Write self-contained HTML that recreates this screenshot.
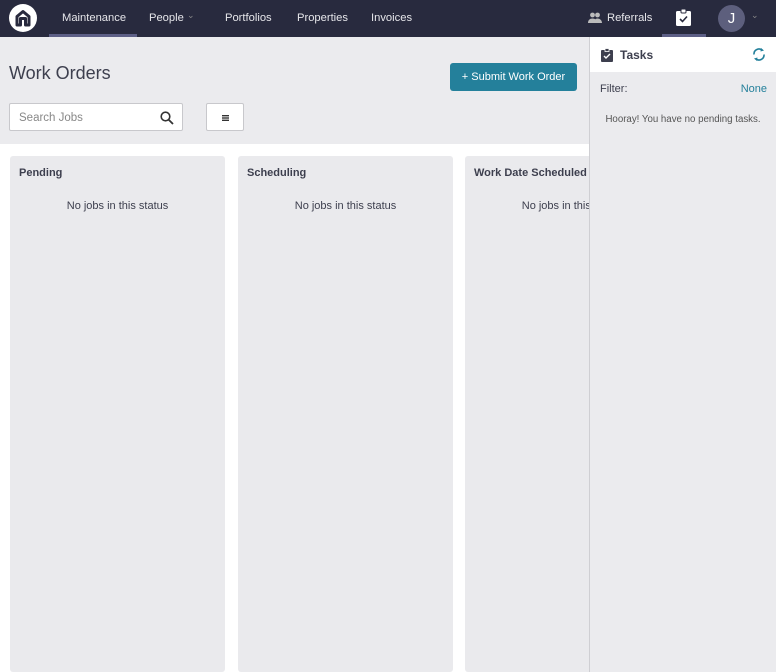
<!DOCTYPE html>
<html><head><meta charset="utf-8"><style>
*{box-sizing:border-box;margin:0;padding:0}
body{width:776px;height:672px;overflow:hidden;font-family:"Liberation Sans",Arial,sans-serif;background:#fff;position:relative;color:#3d3f4e}
.nav{position:absolute;left:0;top:0;width:776px;height:37px;background:#282a3e;color:#e6e6ea;font-size:11.2px;z-index:3}
.nav span{position:absolute;top:12px}
.logo{position:absolute;left:9px;top:4px;width:28px;height:28px;border-radius:50%;background:#fff}
.ul{position:absolute;top:34px;height:3px;background:#5d5f86}
.top{position:absolute;left:0;top:37px;width:590px;height:107px;background:#ebebee}
h1{position:absolute;left:9px;top:63px;font-size:18px;font-weight:normal;color:#3d3f4e}
.btn{position:absolute;left:450px;top:63px;width:127px;height:28px;background:#24809b;color:#fff;border-radius:3px;font-size:11px;text-align:center;line-height:28px}
.search{position:absolute;left:9px;top:103px;width:174px;height:28px;background:#fff;border:1px solid #c8c8cc;border-radius:2px;font-size:11.5px;color:#888;padding:8px 9px}
.lb{position:absolute;left:206px;top:103px;width:38px;height:28px;background:#fff;border:1px solid #c8c8cc;border-radius:2px}
.col{position:absolute;top:156px;width:215px;height:516px;background:#eaeaed;border-radius:3px}
.col b{position:absolute;left:9px;top:11px;font-size:11px;color:#3d3f4e;white-space:nowrap}
.col p{position:absolute;left:0;width:215px;top:44px;text-align:center;font-size:11px;color:#3d3f4e;white-space:nowrap}
.panel{position:absolute;left:589px;top:37px;width:187px;height:635px;background:#ebebee;border-left:1px solid #cfcfd3;z-index:2}
.ph{height:35px;background:#fff;position:relative}
</style></head><body>
<div class="nav">
<div class="logo"><svg width="28" height="28" viewBox="0 0 28 28"><path d="M8 21V12.5L14 7.5L20 12.5V21H16.5V14.5H11.5V21Z" fill="none" stroke="#282a3e" stroke-width="3" stroke-linejoin="round"/></svg></div>
<span style="left:62px">Maintenance</span>
<div class="ul" style="left:49px;width:88px"></div>
<span style="left:149px">People</span>
<span style="left:187px;color:#888;font-size:9px;top:10px">&#8964;</span>
<span style="left:225px">Portfolios</span>
<span style="left:297px">Properties</span>
<span style="left:371px">Invoices</span>
<svg style="position:absolute;left:588px;top:12px" width="14" height="12" viewBox="0 0 14 12"><circle cx="4.5" cy="3" r="2.4" fill="#bbb"/><circle cx="9.5" cy="3" r="2.4" fill="#bbb"/><path d="M0 11c0-3 2-4.5 4.5-4.5S9 8 9 11z M6 11c0-3 1.5-4.5 3.5-4.5S14 8 14 11z" fill="#bbb"/></svg>
<span style="left:607px">Referrals</span>
<svg style="position:absolute;left:676px;top:9px" width="15" height="17" viewBox="0 0 15 17"><rect x="0" y="2" width="15" height="15" rx="1.5" fill="#fff"/><rect x="5" y="0" width="5" height="4" rx="1" fill="#fff" stroke="#282a3e"/><path d="M4 10l2.5 2.5L11 7.5" fill="none" stroke="#282a3e" stroke-width="1.6"/></svg>
<div class="ul" style="left:662px;width:44px"></div>
<div style="position:absolute;left:718px;top:5px;width:27px;height:27px;border-radius:50%;background:#5d5f7d;color:#fff;font-size:15px;text-align:center;line-height:27px">J</div>
<span style="left:751px;color:#888;font-size:9px;top:10px">&#8964;</span>
</div>
<div class="top"></div>
<h1>Work Orders</h1>
<div class="btn">+ Submit Work Order</div>
<div class="search">Search Jobs
<svg style="position:absolute;left:150px;top:7px" width="14" height="14" viewBox="0 0 14 14"><circle cx="5.5" cy="5.5" r="4.3" fill="none" stroke="#333" stroke-width="1.6"/><path d="M8.7 8.7L13 13" stroke="#333" stroke-width="1.8"/></svg></div>
<div class="lb"><svg style="position:absolute;left:15px;top:11px" width="7" height="6" viewBox="0 0 7 6"><rect width="7" height="1.4" fill="#333"/><rect y="2.3" width="7" height="1.4" fill="#333"/><rect y="4.6" width="7" height="1.4" fill="#333"/></svg></div>
<div class="col" style="left:10px"><b>Pending</b><p>No jobs in this status</p></div>
<div class="col" style="left:238px"><b>Scheduling</b><p>No jobs in this status</p></div>
<div class="col" style="left:465px"><b>Work Date Scheduled</b><p>No jobs in this status</p></div>
<div class="panel">
<div class="ph">
<svg style="position:absolute;left:11px;top:11px" width="12" height="14" viewBox="0 0 12 14"><rect y="2" width="12" height="12" rx="1" fill="#3d3f4e"/><rect x="4" y="0.5" width="4" height="3" fill="#3d3f4e" stroke="#fff" stroke-width="0.8"/><path d="M3 8l2 2 4-4" fill="none" stroke="#fff" stroke-width="1.4"/></svg>
<span style="position:absolute;left:30px;top:11px;font-size:12px;font-weight:bold">Tasks</span>
<svg style="position:absolute;left:162px;top:10px" width="14" height="15" viewBox="0 0 14 15"><path d="M2 7.5A5 5 0 0 1 10.5 3.5M12 7.5A5 5 0 0 1 3.5 11.5" fill="none" stroke="#24809b" stroke-width="1.6"/><path d="M9 1l3 2.5-3.5 1z M5 14L2 11.5l3.5-1z" fill="#24809b"/></svg>
</div>
<span style="position:absolute;left:10px;top:46px;font-size:11px">Filter:</span>
<span style="position:absolute;right:9px;top:46px;font-size:11px;color:#24809b">None</span>
<div style="position:absolute;left:0;width:186px;top:77px;text-align:center;font-size:9.7px;color:#555">Hooray! You have no pending tasks.</div>
</div>
</body></html>
